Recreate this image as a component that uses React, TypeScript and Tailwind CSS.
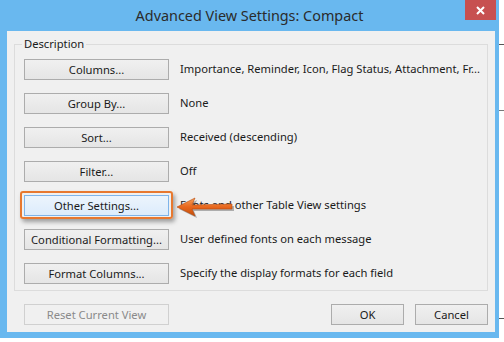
import React from "react";

// Outlook "Advanced View Settings" dialog, Win8 chrome, with the callout
// arrow pointing at "Other Settings...".

const rows = [
  { label: "Columns...", desc: "Importance, Reminder, Icon, Flag Status, Attachment, Fr..." },
  { label: "Group By...", desc: "None" },
  { label: "Sort...", desc: "Received (descending)" },
  { label: "Filter...", desc: "Off" },
  { label: "Other Settings...", desc: "Fonts and other Table View settings", hot: true },
  { label: "Conditional Formatting...", desc: "User defined fonts on each message" },
  { label: "Format Columns...", desc: "Specify the display formats for each field" },
];

const font = { fontFamily: '"Noto Sans", "Open Sans", sans-serif' };

function WinButton({
  children,
  hot,
  disabled,
  className = "",
}: {
  children: React.ReactNode;
  hot?: boolean;
  disabled?: boolean;
  className?: string;
}) {
  const look = hot
    ? "border-[#7eb4ea] bg-gradient-to-b from-[#ecf4fc] to-[#dcecfc] text-[#1a1a1a]"
    : disabled
      ? "border-[#d0d0d0] bg-[#f0f0f0] text-[#8a8a8a]"
      : "border-[#acacac] bg-gradient-to-b from-[#f0f0f0] to-[#e5e5e5] text-[#1a1a1a]";
  return (
    <div
      className={
        "flex h-[21px] shrink-0 items-center justify-center border text-[11.2px] leading-none " +
        look +
        " " +
        className
      }
    >
      {children}
    </div>
  );
}

function Arrow() {
  return (
    <svg
      className="pointer-events-none absolute left-[170px] top-[192px]"
      width="70"
      height="32"
      viewBox="170 192 70 32"
    >
      <defs>
        <linearGradient id="ar" x1="0" y1="0" x2="0" y2="1">
          <stop offset="0" stopColor="#f6a15a" />
          <stop offset="0.5" stopColor="#e8661c" />
          <stop offset="1" stopColor="#c4500c" />
        </linearGradient>
      </defs>
      <path
        d="M179 209 L197 200 L194 207 L234 206 L234 211 L194 211 L197 218 Z"
        fill="#000"
        opacity="0.28"
      />
      <path
        d="M177 207 L195 198 L192 205 L232 204 L232 209 L192 209 L195 216 Z"
        fill="url(#ar)"
        stroke="#b8480a"
        strokeWidth="0.6"
      />
    </svg>
  );
}

export default function App() {
  return (
    <div className="relative h-[342px] w-[504px] overflow-hidden bg-white" style={font}>
      {/* stray bits of the window behind */}
      <div className="absolute right-0 top-[44px] h-px w-[5px] bg-[#555]" />
      <div className="absolute right-0 top-[110px] h-px w-[5px] bg-[#777]" />
      <div className="absolute right-0 top-[318px] h-px w-[5px] bg-[#555]" />

      <div className="flex h-[338px] w-[499px] flex-col bg-[#69b8ef]">
        {/* title bar */}
        <div className="relative flex h-[31px] shrink-0 items-center justify-center">
          <span className="text-[14.4px] text-[#2b2b2b]">Advanced View Settings: Compact</span>
          <div className="absolute right-[3px] top-0 flex h-[20px] w-[31px] items-center justify-center bg-[#c75050]">
            <svg width="9" height="9" viewBox="0 0 9 9">
              <path d="M1 1 L8 8 M8 1 L1 8" stroke="#fff" strokeWidth="2" />
            </svg>
          </div>
        </div>

        {/* client area */}
        <div className="mb-[6px] ml-[7px] mr-[4px] flex flex-1 flex-col bg-[#f0f0f0] px-[7px] pt-[13px]">
          <div className="relative flex flex-col gap-[13px] border border-[#dcdcdc] pb-[6px] pl-[9px] pt-[14px]">
            <span className="absolute -top-[9px] left-[7px] bg-[#f0f0f0] px-[2px] text-[11.2px] leading-[16px] text-[#1a1a1a]">
              Description
            </span>
            {rows.map((r) => (
              <div key={r.label} className="flex items-center gap-[11px]">
                <WinButton hot={r.hot} className="w-[145px]">
                  {r.label}
                </WinButton>
                <span className="whitespace-nowrap text-[11.2px] text-[#1a1a1a]">{r.desc}</span>
              </div>
            ))}
          </div>

          <div className="mt-[13px] flex items-center">
            <WinButton disabled className="ml-[10px] w-[145px]">
              Reset Current View
            </WinButton>
            <div className="flex-1" />
            <WinButton className="w-[73px]">OK</WinButton>
            <WinButton className="ml-[11px] w-[73px]">Cancel</WinButton>
          </div>
        </div>
      </div>

      {/* callout highlight around Other Settings */}
      <div className="pointer-events-none absolute left-[20px] top-[191px] h-[28px] w-[153px] rounded-[3px] border-2 border-[#e7782f] shadow-[2px_3px_4px_rgba(0,0,0,0.35)]" />
      <Arrow />
    </div>
  );
}
